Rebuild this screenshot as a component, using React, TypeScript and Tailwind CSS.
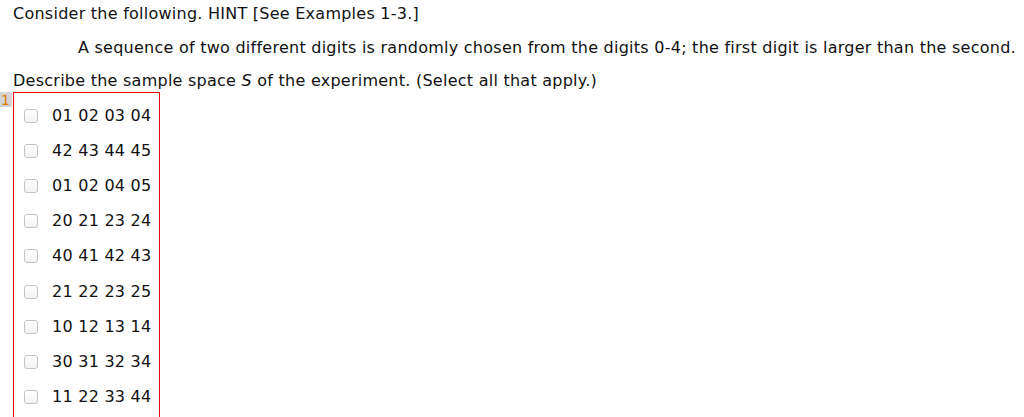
import React from 'react';

const options = [
  '01 02 03 04',
  '42 43 44 45',
  '01 02 04 05',
  '20 21 23 24',
  '40 41 42 43',
  '21 22 23 25',
  '10 12 13 14',
  '30 31 32 34',
  '11 22 33 44',
];

const App: React.FC = () => {
  return (
    <div className="h-[417px] overflow-hidden bg-white font-['DejaVu_Sans',Verdana,sans-serif] text-[16px] leading-[20px] tracking-[0.25px] text-[#111]">
      <p className="pl-[13px] pt-[4px]">Consider the following. HINT [See Examples 1-3.]</p>
      <p className="pl-[78px] pt-[14px]">
        A sequence of two different digits is randomly chosen from the digits 0-4; the first digit is larger than the second.
      </p>
      <p className="pl-[13px] pt-[13px]">
        Describe the sample space <i>S</i> of the experiment. (Select all that apply.)
      </p>
      <div className="relative mt-[1px]">
        <span className="absolute left-0 top-0 flex h-[15px] w-[12px] items-center justify-end overflow-hidden bg-[#d4d4d4] pr-[2px] text-[14px] leading-none tracking-normal text-[#e07b00]">
          1
        </span>
        <div className="ml-[13px] w-[147px] border-[1.5px] border-solid border-red-600 pb-[20px] pt-[5px]">
          {options.map((o) => (
            <label key={o} className="flex h-[35.2px] items-center">
              <span className="ml-[10px] h-[14px] w-[14px] rounded-[3px] border border-[#c4c4c4] bg-gradient-to-b from-white to-[#f3f3f3]" />
              <span className="ml-[14px] whitespace-nowrap">{o}</span>
            </label>
          ))}
        </div>
      </div>
    </div>
  );
};

export default App;
